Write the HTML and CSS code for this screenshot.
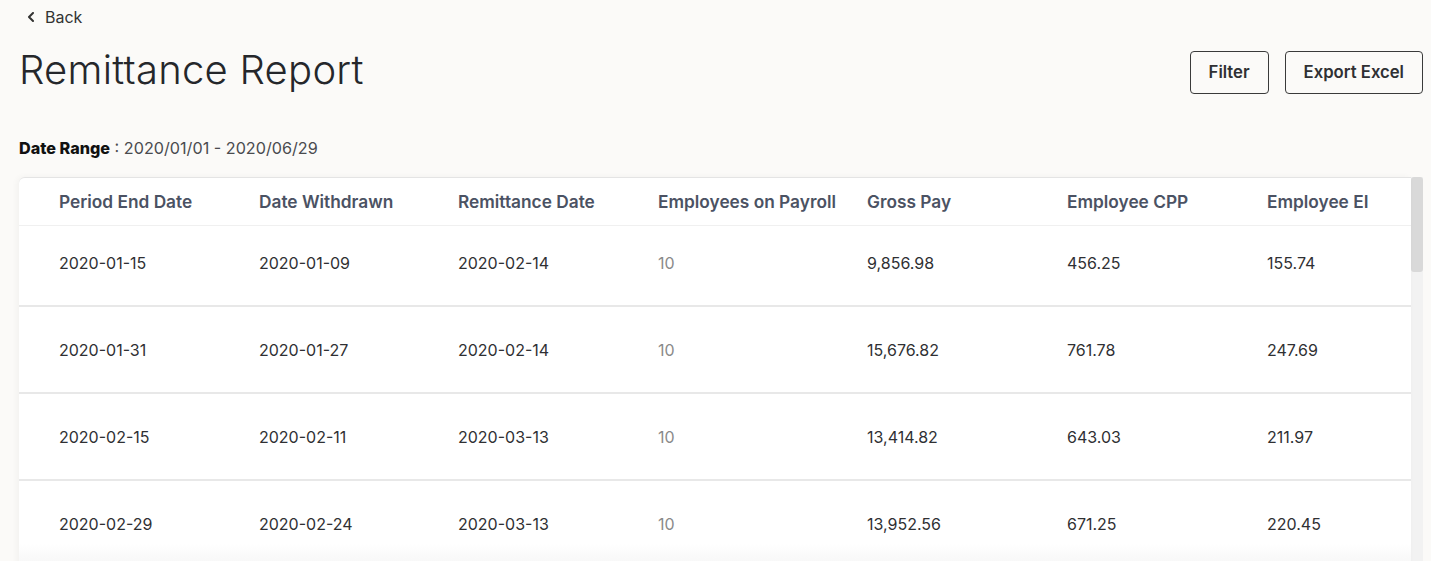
FILE: index.html
```html
<!DOCTYPE html>
<html lang="en">
<head>
<meta charset="utf-8">
<title>Remittance Report</title>
<link rel="stylesheet" href="styles.css">
</head>
<body>
<div class="page">
  <a class="back" href="#">
    <svg class="back-icon" width="8" height="10" viewBox="0 0 8 10"><path d="M6 1 L2 5 L6 9" fill="none" stroke="#333" stroke-width="2" stroke-linecap="round" stroke-linejoin="round"/></svg>
    <span>Back</span>
  </a>
  <div class="title-row">
    <h1 class="title">Remittance Report</h1>
    <div class="actions">
      <button class="btn">Filter</button>
      <button class="btn">Export Excel</button>
    </div>
  </div>
  <p class="range"><strong>Date Range</strong> : 2020/01/01 - 2020/06/29</p>
  <div class="table-wrap">
    <div class="card">
      <table class="report">
        <colgroup>
          <col class="c1"><col class="c2"><col class="c3"><col class="c4"><col class="c5"><col class="c6"><col class="c7">
        </colgroup>
        <thead>
          <tr>
            <th>Period End Date</th>
            <th>Date Withdrawn</th>
            <th>Remittance Date</th>
            <th>Employees on Payroll</th>
            <th>Gross Pay</th>
            <th>Employee CPP</th>
            <th>Employee EI</th>
          </tr>
        </thead>
        <tbody>
          <tr class="first">
            <td>2020-01-15</td><td>2020-01-09</td><td>2020-02-14</td><td class="muted">10</td><td>9,856.98</td><td>456.25</td><td>155.74</td>
          </tr>
          <tr>
            <td>2020-01-31</td><td>2020-01-27</td><td>2020-02-14</td><td class="muted">10</td><td>15,676.82</td><td>761.78</td><td>247.69</td>
          </tr>
          <tr>
            <td>2020-02-15</td><td>2020-02-11</td><td>2020-03-13</td><td class="muted">10</td><td>13,414.82</td><td>643.03</td><td>211.97</td>
          </tr>
          <tr>
            <td>2020-02-29</td><td>2020-02-24</td><td>2020-03-13</td><td class="muted">10</td><td>13,952.56</td><td>671.25</td><td>220.45</td>
          </tr>
        </tbody>
      </table>
    </div>
    <div class="scrollbar"><div class="thumb"></div></div>
  </div>
</div>
</body>
</html>
```
FILE: styles.css
```css
html, body {
  margin: 0;
  padding: 0;
  background: #fbfaf8;
  height: 100%;
  overflow: hidden;
}
body {
  font-family: Inter, "Liberation Sans", sans-serif;
  color: #2f3033;
}
.page {
  padding: 0 8px 0 19px;
}
.back {
  display: flex;
  align-items: center;
  height: 34px;
  padding-left: 8px;
  gap: 10px;
  color: #333;
  text-decoration: none;
  font-size: 16px;
  width: max-content;
}
.back-icon { display: block; }
.title-row {
  display: flex;
  align-items: center;
  justify-content: space-between;
  margin-top: 16px;
  height: 44px;
}
.title {
  margin: 0 0 5px;
  font-size: 40px;
  line-height: 44px;
  font-weight: 300;
  letter-spacing: 0.25px;
  color: #25272b;
}
.actions {
  display: flex;
  gap: 16px;
}
.btn {
  font-family: inherit;
  font-size: 16.7px;
  font-weight: 600;
  color: #2f3033;
  background: transparent;
  border: 1px solid #3a3a3a;
  border-radius: 4px;
  height: 43px;
  padding: 0 18px;
}
.range {
  margin: 43px 0 0;
  font-size: 16.2px;
  color: #4a4b4f;
  line-height: 22px;
}
.range strong {
  color: #111;
  font-weight: 800;
}
.table-wrap {
  display: flex;
  margin-top: 18px;
  height: 400px;
}
.card {
  position: relative;
  flex: 1;
  background: #fff;
  border-top: 1px solid #e4e4e4;
  border-radius: 6px 0 0 0;
  box-shadow: -2px 0 6px rgba(0,0,0,0.04);
  overflow: hidden;
}
.card::after {
  content: "";
  position: absolute;
  left: 0;
  right: 0;
  top: 366px;
  height: 20px;
  background: linear-gradient(to bottom, rgba(250,250,250,0), rgba(246,246,246,0.9));
  pointer-events: none;
}
.report {
  border-collapse: collapse;
  table-layout: fixed;
  width: 100%;
}
.c1 { width: 200px; }
.c2 { width: 199px; }
.c3 { width: 200px; }
.c4 { width: 209px; }
.c5 { width: 200px; }
.c6 { width: 200px; }
.report th, .report td {
  text-align: left;
  padding: 0 0 0 40px;
  white-space: nowrap;
}
.report th {
  height: 47px;
  font-size: 17.3px;
  font-weight: 600;
  color: #4b5263;
  border-bottom: 1px solid #f0f0f0;
}
.report td {
  height: 85px;
  font-size: 16px;
  color: #2f3033;
  border-bottom: 2px solid #e8e8e8;
}
.report tr.first td {
  height: 73px;
  padding-bottom: 6px;
}
.report td.muted {
  color: #8a8a8a;
}
.scrollbar {
  width: 12px;
  background: #f2f2f2;
}
.thumb {
  height: 95px;
  background: #d9d9d9;
  border-radius: 3px;
}
```
